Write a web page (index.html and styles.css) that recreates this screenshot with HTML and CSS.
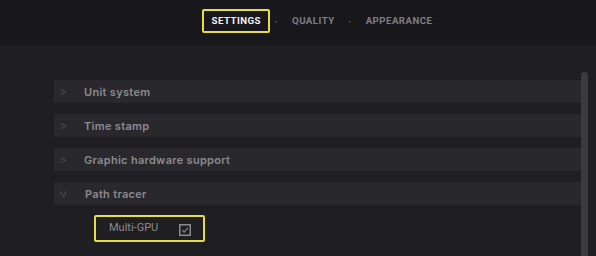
FILE: index.html
```html
<!DOCTYPE html>
<html>
<head>
<meta charset="utf-8">
<link rel="stylesheet" href="styles.css">
</head>
<body>
<header class="topbar">
  <nav class="tabs">
    <span class="tab active">SETTINGS</span>
    <span class="sep">·</span>
    <span class="tab">QUALITY</span>
    <span class="sep">·</span>
    <span class="tab">APPEARANCE</span>
  </nav>
</header>
<main class="content">
  <div class="list">
    <div class="row"><span class="chev">&gt;</span><span class="label">Unit system</span></div>
    <div class="row"><span class="chev">&gt;</span><span class="label">Time stamp</span></div>
    <div class="row"><span class="chev">&gt;</span><span class="label">Graphic hardware support</span></div>
    <div class="row"><span class="chev open">&gt;</span><span class="label">Path tracer</span></div>
    <div class="sub">
      <div class="option">
        <span class="opt-label">Multi-GPU</span>
        <svg class="check" width="12" height="12" viewBox="0 0 12 12">
          <rect x="0.75" y="0.75" width="10.5" height="10.5" fill="none" stroke="#8a8a8e" stroke-width="1.5"/>
          <path d="M3.2 6.2 L5.1 8.1 L8.8 3.9" fill="none" stroke="#8a8a8e" stroke-width="1.2"/>
        </svg>
      </div>
    </div>
  </div>
  <div class="scrollbar"></div>
</main>
</body>
</html>
```
FILE: styles.css
```css
* { box-sizing: border-box; }
html, body { margin: 0; padding: 0; }
body {
  width: 596px;
  height: 256px;
  overflow: hidden;
  background: #1f1f23;
  font-family: Inter, "Noto Sans", sans-serif;
}
.topbar {
  height: 45px;
  background: #18181c;
  display: flex;
  justify-content: center;
  align-items: center;
  padding-left: 47px;
  padding-bottom: 3px;
}
.tabs {
  display: flex;
  align-items: center;
}
.tab {
  font-family: Roboto, "Liberation Sans", sans-serif;
  font-size: 9.7px;
  font-weight: 700;
  letter-spacing: 0.45px;
  color: #7e7e83;
  line-height: 1;
  height: 24px;
  display: flex;
  align-items: center;
  padding: 0 7px 0 8px;
  border: 2px solid transparent;
  border-radius: 2px;
}
.tab.active {
  color: #f2f2f2;
  border-color: #e6dc46;
}
.sep {
  width: 12px;
  text-align: center;
  color: #5e5e62;
  font-size: 10px;
  font-weight: 700;
}
.content {
  position: relative;
  display: flex;
  padding: 35px 0 0 54px;
  height: 211px;
  overflow: hidden;
}
.list {
  width: 527px;
  display: flex;
  flex-direction: column;
  gap: 11px;
}
.row {
  height: 23px;
  background: #29292d;
  display: flex;
  align-items: center;
  padding-left: 5px;
}
.chev {
  width: 25px;
  color: #515156;
  font-size: 12px;
  font-weight: 300;
  line-height: 1;
}
.chev.open {
  display: inline-block;
  transform: rotate(90deg) scaleY(1.15);
  width: 8px;
  margin-right: 17px;
  margin-left: 1px;
}
.label {
  color: #8a8a8f;
  font-size: 11px;
  font-weight: 600;
  letter-spacing: 0.3px;
}
.sub {
  margin-top: -1px;
  padding-left: 40px;
}
.option {
  width: 111px;
  height: 27px;
  border: 2px solid #e6dc46;
  border-radius: 2px;
  display: flex;
  align-items: center;
  padding-left: 13px;
  padding-top: 1px;
}
.opt-label {
  font-family: Roboto, "Liberation Sans", sans-serif;
  color: #8a8a8e;
  font-size: 11px;
  width: 70px;
  margin-top: -3px;
}
.check { display: block; margin-top: 1px; }
.scrollbar {
  width: 7px;
  margin-top: -8px;
  height: 250px;
  background: #3a3a3f;
  border-radius: 3px 3px 0 0;
}
```
